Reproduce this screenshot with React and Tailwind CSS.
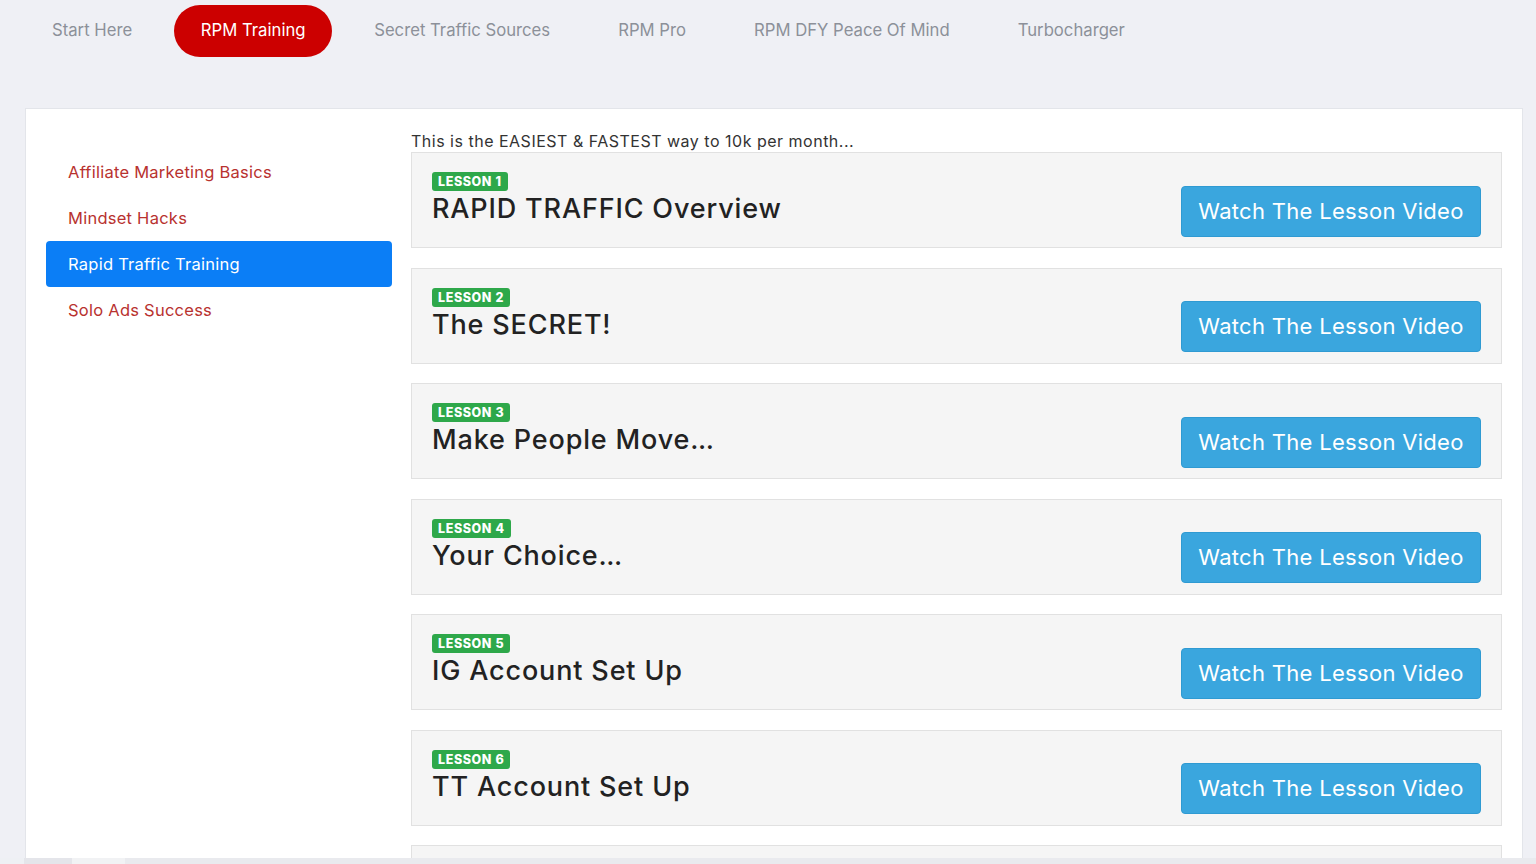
import React from "react";

const nav = ["Start Here", "RPM Training", "Secret Traffic Sources", "RPM Pro", "RPM DFY Peace Of Mind", "Turbocharger"];
const side = ["Affiliate Marketing Basics", "Mindset Hacks", "Rapid Traffic Training", "Solo Ads Success"];
const lessons = [
  "RAPID TRAFFIC Overview",
  "The SECRET!",
  "Make People Move...",
  "Your Choice...",
  "IG Account Set Up",
  "TT Account Set Up",
];

function Title({ t }) {
  if (t.endsWith("...")) {
    return (
      <>
        {t.slice(0, -3)}
        <span className="tracking-[-0.5px]">...</span>
      </>
    );
  }
  return t;
}

export default function App() {
  return (
    <div
      className="h-[864px] w-full overflow-hidden bg-[#eff0f5] relative"
      style={{ fontFamily: "Inter, 'Open Sans', Arial, sans-serif" }}
    >
      <nav className="flex items-center gap-4 pl-[26px] pt-[5px] h-[57px]">
        {nav.map((n) =>
          n === "RPM Training" ? (
            <div key={n} className="h-[52px] w-[158px] justify-center flex items-center rounded-full bg-[#cc0000] text-white text-[16.7px]">
              {n}
            </div>
          ) : (
            <div key={n} className="h-[52px] px-[26px] flex items-center text-[#8c9099] text-[16.7px]">
              {n}
            </div>
          )
        )}
      </nav>

      <div className="ml-[25px] mr-[13px] mt-[51px] bg-white border border-[#e3e5ea] flex pl-[20px] pr-[20px] pt-[21px] h-[800px]">
        <aside className="w-[346px] shrink-0 pt-[19px] flex flex-col">
          {side.map((s) =>
            s === "Rapid Traffic Training" ? (
              <div key={s} className="h-[46px] flex items-center pl-[22px] rounded-[4px] bg-[#0b7ef6] text-white text-[16.5px] tracking-[0.25px]">
                {s}
              </div>
            ) : (
              <div key={s} className="h-[46px] flex items-center pl-[22px] text-[#b8322f] text-[16.5px] tracking-[0.25px]">
                {s}
              </div>
            )
          )}
        </aside>

        <main className="flex-1 ml-[19px] flex flex-col">
          <p className="text-[16px] text-[#333] leading-[22px] tracking-[0.5px]">
            This is the EASIEST &amp; FASTEST way to 10k per month...
          </p>
          <div className="flex flex-col gap-[19.5px]">
            {lessons.map((t, i) => (
              <div
                key={i}
                className="h-[96px] shrink-0 bg-[#f5f5f5] border border-[#e1e1e1] flex items-center justify-between pl-[20px] pr-[20px]"
              >
                <div className="self-start pt-[19px] flex flex-col items-start">
                  <span className="bg-[#2ea84a] text-white text-[12.5px] font-extrabold leading-[19px] px-[6px] rounded-[3px] tracking-[0.6px]">
                    LESSON {i + 1}
                  </span>
                  <span className="mt-[1px] text-[27px] leading-[34px] font-medium text-[#222] tracking-[0.85px]">
                    <Title t={t} />
                  </span>
                </div>
                <button className="mt-[22px] w-[300px] h-[51px] rounded-[4px] bg-[#3aa6de] border border-[#2f9ad2] text-white text-[22px] tracking-[0.3px]">
                  Watch The Lesson Video
                </button>
              </div>
            ))}
            <div className="h-[96px] shrink-0 bg-[#f5f5f5] border border-[#e1e1e1]" />
          </div>
        </main>
      </div>

      <div className="absolute left-0 right-0 bottom-0 h-[6px] bg-[#e9eaee] flex">
        <div className="w-[24px] bg-[#eef0f4]" />
        <div className="w-[48px] bg-[#e4e5ea]" />
        <div className="w-[53px] bg-[#f1f2f4]" />
      </div>
    </div>
  );
}
